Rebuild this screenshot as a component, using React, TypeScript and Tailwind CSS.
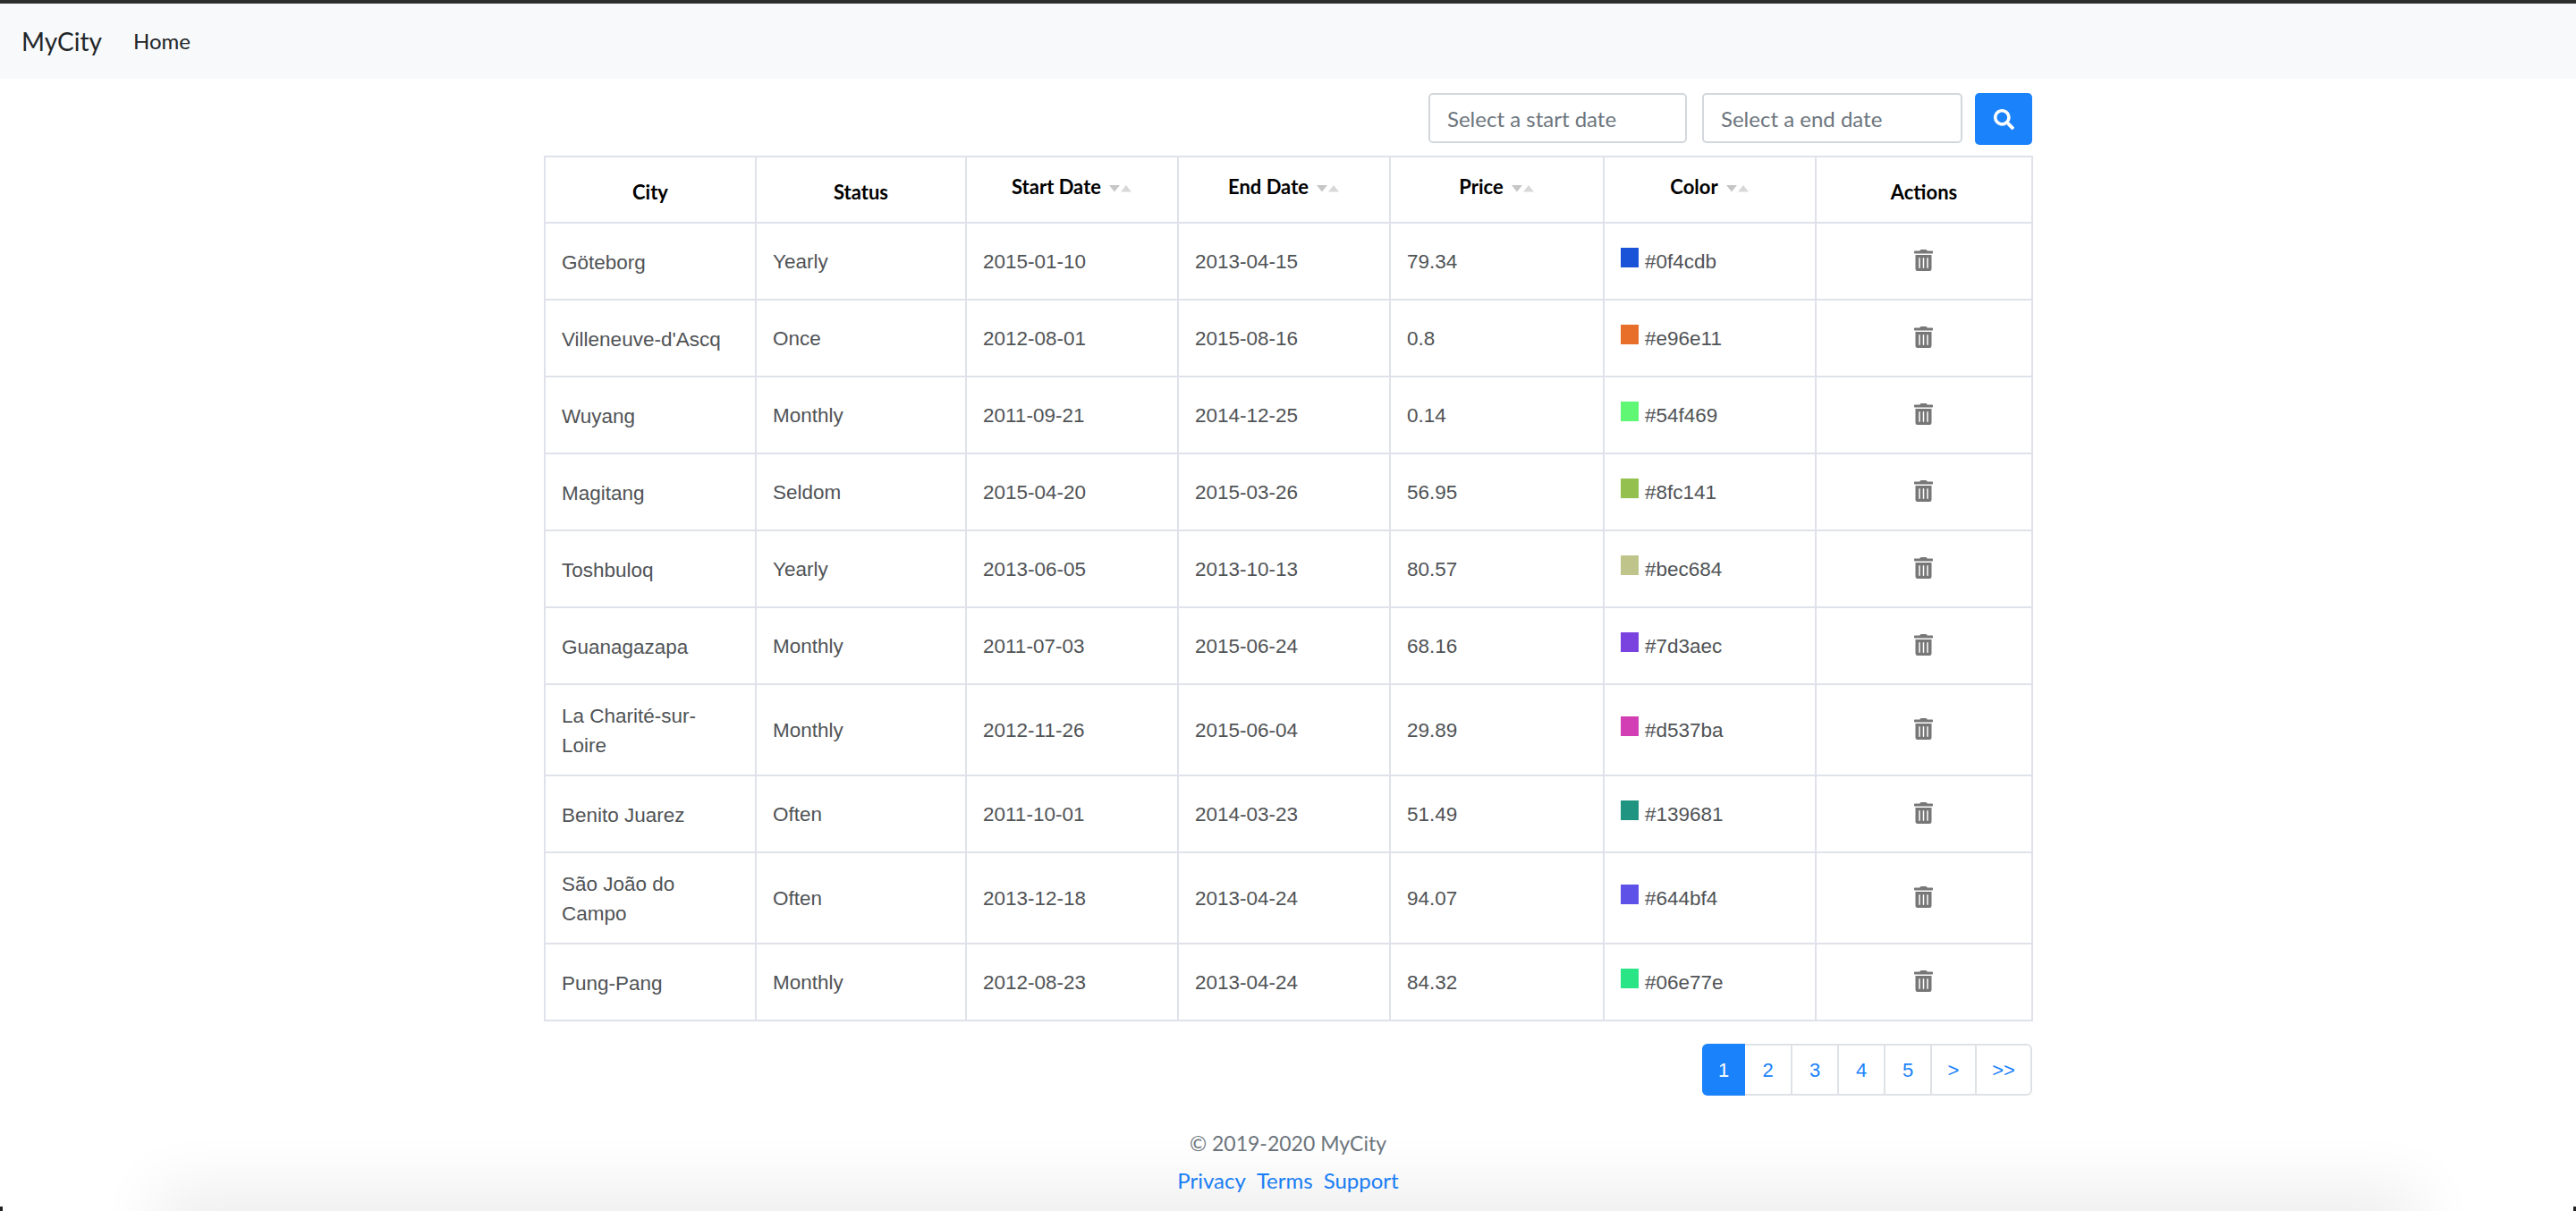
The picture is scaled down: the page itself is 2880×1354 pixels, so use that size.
import { FaSearch, FaTrashAlt } from 'react-icons/fa';

const rows = [
  { city: 'Göteborg', status: 'Yearly', start: '2015-01-10', end: '2013-04-15', price: '79.34', color: '#0f4cdb', swatch: '#1a52d8' },
  { city: "Villeneuve-d'Ascq", status: 'Once', start: '2012-08-01', end: '2015-08-16', price: '0.8', color: '#e96e11', swatch: '#e86f29' },
  { city: 'Wuyang', status: 'Monthly', start: '2011-09-21', end: '2014-12-25', price: '0.14', color: '#54f469', swatch: '#5ff774' },
  { city: 'Magitang', status: 'Seldom', start: '2015-04-20', end: '2015-03-26', price: '56.95', color: '#8fc141', swatch: '#93c04f' },
  { city: 'Toshbuloq', status: 'Yearly', start: '2013-06-05', end: '2013-10-13', price: '80.57', color: '#bec684', swatch: '#bfc58a' },
  { city: 'Guanagazapa', status: 'Monthly', start: '2011-07-03', end: '2015-06-24', price: '68.16', color: '#7d3aec', swatch: '#7a43e0' },
  { city: 'La Charité-sur-Loire', status: 'Monthly', start: '2012-11-26', end: '2015-06-04', price: '29.89', color: '#d537ba', swatch: '#d23fb4' },
  { city: 'Benito Juarez', status: 'Often', start: '2011-10-01', end: '2014-03-23', price: '51.49', color: '#139681', swatch: '#1f9480' },
  { city: 'São João do Campo', status: 'Often', start: '2013-12-18', end: '2013-04-24', price: '94.07', color: '#644bf4', swatch: '#5e51e8' },
  { city: 'Pung-Pang', status: 'Monthly', start: '2012-08-23', end: '2013-04-24', price: '84.32', color: '#06e77e', swatch: '#2ae585' },
];

const headers = [
  { label: 'City', sort: false },
  { label: 'Status', sort: false },
  { label: 'Start Date', sort: true },
  { label: 'End Date', sort: true },
  { label: 'Price', sort: true },
  { label: 'Color', sort: true },
  { label: 'Actions', sort: false },
];

const pages = [
  { label: '1', w: 'w-[48px]', active: true },
  { label: '2', w: 'w-[53px]' },
  { label: '3', w: 'w-[52px]' },
  { label: '4', w: 'w-[52px]' },
  { label: '5', w: 'w-[52px]' },
  { label: '>', w: 'w-[50px]' },
  { label: '>>', w: 'w-[62px]' },
];

function SortCaret() {
  return (
    <svg width="26" height="9" viewBox="0 0 26 9" className="ml-[9px] inline-block align-[2px]">
      <polygon points="0,1 12,1 6,8.5" fill="#c6c6c6" />
      <polygon points="13,8.5 25,8.5 19,1" fill="#d8d8d8" />
    </svg>
  );
}

export default function App() {
  return (
    <div className="relative h-[1354px] overflow-hidden bg-white font-['Lato','Open_Sans',sans-serif]">
      <nav className="flex h-[88px] items-center border-t-4 border-[#2e2e2e] bg-[#f8f9fa] pl-[24px] text-[#212529]">
        <span className="text-[28px]">MyCity</span>
        <span className="ml-[35px] text-[24px]">Home</span>
      </nav>

      <div className="ml-[608px] w-[1664px]">
        <div className="mt-[16px] flex items-start justify-end">
          <input
            placeholder="Select a start date"
            className="h-[56px] w-[289px] rounded-[5px] border-2 border-[#d3d7dd] px-[19px] text-[24px] outline-none placeholder:text-[#6c757d]"
          />
          <input
            placeholder="Select a end date"
            className="ml-[17px] h-[56px] w-[291px] rounded-[5px] border-2 border-[#d3d7dd] px-[19px] text-[24px] outline-none placeholder:text-[#6c757d]"
          />
          <button className="ml-[14px] flex h-[58px] w-[64px] items-center justify-center rounded-[5px] bg-[#1a82fb] text-white">
            <FaSearch className="h-[23px] w-[23px]" />
          </button>
        </div>

        <table className="mt-[12px] w-[1663px] table-fixed border-collapse font-['Liberation_Sans',Arial,sans-serif] text-[22.5px] text-[#505356]">
          <colgroup>
            <col className="w-[236px]" />
            <col className="w-[235px]" />
            <col className="w-[237px]" />
            <col className="w-[237px]" />
            <col className="w-[239px]" />
            <col className="w-[237px]" />
            <col className="w-[242px]" />
          </colgroup>
          <thead>
            <tr className="h-[74px]">
              {headers.map((h) => (
                <th
                  key={h.label}
                  className={`border-2 border-[#dfe2ea] align-bottom font-['Lato',sans-serif] text-[22px] font-bold text-black ${h.sort ? 'pb-[23px]' : 'pb-[17px]'}`}
                >
                  {h.label}
                  {h.sort && <SortCaret />}
                </th>
              ))}
            </tr>
          </thead>
          <tbody>
            {rows.map((r) => (
              <tr key={r.city} className="h-[86px]">
                <td className="border-2 border-[#dfe2ea] pb-[16px] pl-[18px] pr-[30px] pt-[18px] leading-[33px]">{r.city}</td>
                <td className="border-2 border-[#dfe2ea] px-[18px] pt-[2px]">{r.status}</td>
                <td className="border-2 border-[#dfe2ea] px-[18px] pt-[2px]">{r.start}</td>
                <td className="border-2 border-[#dfe2ea] px-[18px] pt-[2px]">{r.end}</td>
                <td className="border-2 border-[#dfe2ea] px-[18px] pt-[2px]">{r.price}</td>
                <td className="border-2 border-[#dfe2ea] px-[18px] pt-[2px]">
                  <span className="inline-block h-[22px] w-[20px] align-[1px]" style={{ backgroundColor: r.swatch }} />
                  <span className="ml-[7px]">{r.color}</span>
                </td>
                <td className="border-2 border-[#dfe2ea] pr-[2px] text-center">
                  <FaTrashAlt className="mx-auto mb-[3px] h-[24px] w-[21px] text-[#777777]" />
                </td>
              </tr>
            ))}
          </tbody>
        </table>

        <div className="mt-[25px] flex justify-end">
          <ul className="flex h-[58px] font-['Liberation_Sans',Arial,sans-serif] text-[22px] text-[#1a82fb]">
            {pages.map((p, i) => (
              <li
                key={p.label}
                className={`flex items-center justify-center border-y-2 ${p.w} ${
                  p.active
                    ? 'rounded-l-[6px] border-[#1a82fb] bg-[#1a82fb] text-white'
                    : 'border-r-2 border-[#dee2e6]'
                } ${i === pages.length - 1 ? 'rounded-r-[6px]' : ''}`}
              >
                {p.label}
              </li>
            ))}
          </ul>
        </div>

        <footer className="mt-[32px] text-center text-[24px] leading-[42px]">
          <p className="text-[23px] text-[#6c757d]">© 2019-2020 MyCity</p>
          <p className="flex justify-center gap-[12px] text-[#1a82fb]">
            <span>Privacy</span>
            <span>Terms</span>
            <span>Support</span>
          </p>
        </footer>
      </div>

      {/* window shadow and rounded corners from the screenshot */}
      <div className="pointer-events-none absolute bottom-[-30px] left-[200px] right-[200px] h-[30px] shadow-[0_0_70px_25px_rgba(0,0,0,0.075)]" />
      <div className="absolute bottom-0 left-0 h-[5px] w-[3px] bg-[#222222]" />
      <div className="absolute bottom-0 right-0 h-[5px] w-[3px] bg-[#222222]" />
    </div>
  );
}
